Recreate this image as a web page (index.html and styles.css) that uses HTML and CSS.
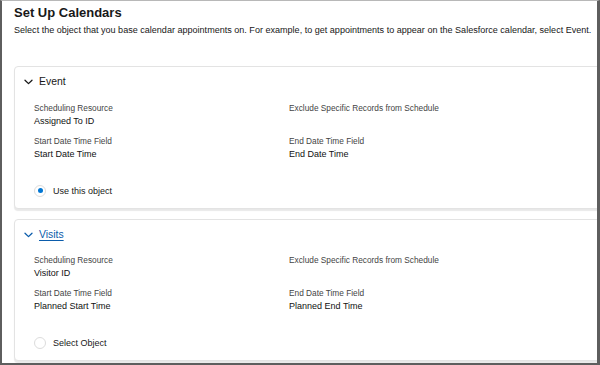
FILE: index.html
```html
<!DOCTYPE html>
<html>
<head>
<meta charset="utf-8">
<link rel="stylesheet" href="styles.css">
</head>
<body>
<div class="frame">
  <h1 class="title">Set Up Calendars</h1>
  <p class="subtitle">Select the object that you base calendar appointments on. For example, to get appointments to appear on the Salesforce calendar, select Event.</p>

  <section class="card">
    <div class="card-header">
      <svg class="chevron" width="9" height="6" viewBox="0 0 9 6"><path d="M1 1.2 L4.5 4.6 L8 1.2" fill="none" stroke="#181818" stroke-width="1.3" stroke-linecap="round" stroke-linejoin="round"/></svg>
      <span class="card-title">Event</span>
    </div>
    <div class="card-body">
      <div class="fields">
        <div class="field"><div class="label">Scheduling Resource</div><div class="value">Assigned To ID</div></div>
        <div class="field"><div class="label">Exclude Specific Records from Schedule</div><div class="value"></div></div>
        <div class="field"><div class="label">Start Date Time Field</div><div class="value">Start Date Time</div></div>
        <div class="field"><div class="label">End Date Time Field</div><div class="value">End Date Time</div></div>
      </div>
      <div class="radio-row">
        <span class="radio checked"></span>
        <span class="radio-label">Use this object</span>
      </div>
    </div>
  </section>

  <section class="card">
    <div class="card-header">
      <svg class="chevron" width="9" height="6" viewBox="0 0 9 6"><path d="M1 1.2 L4.5 4.6 L8 1.2" fill="none" stroke="#0b5cab" stroke-width="1.3" stroke-linecap="round" stroke-linejoin="round"/></svg>
      <a class="card-title link">Visits</a>
    </div>
    <div class="card-body">
      <div class="fields">
        <div class="field"><div class="label">Scheduling Resource</div><div class="value">Visitor ID</div></div>
        <div class="field"><div class="label">Exclude Specific Records from Schedule</div><div class="value"></div></div>
        <div class="field"><div class="label">Start Date Time Field</div><div class="value">Planned Start Time</div></div>
        <div class="field"><div class="label">End Date Time Field</div><div class="value">Planned End Time</div></div>
      </div>
      <div class="radio-row">
        <span class="radio"></span>
        <span class="radio-label">Select Object</span>
      </div>
    </div>
  </section>
</div>
</body>
</html>
```

FILE: styles.css
```css
html, body {
  margin: 0;
  padding: 0;
  background: #ffffff;
}
body {
  font-family: "Liberation Sans", Arial, sans-serif;
  color: #181818;
}
.frame {
  box-sizing: border-box;
  width: 600px;
  height: 365px;
  overflow: hidden;
  border-top: 1px solid #b8b8b8;
  border-left: 2px solid #5e5e5e;
  border-right: 3px solid #5e5e5e;
  border-bottom: 2px solid #5e5e5e;
  padding: 4px 0 0 12px;
}
.title {
  margin: 0;
  font-size: 13px;
  line-height: 16px;
  font-weight: bold;
  color: #181818;
}
.subtitle {
  margin: 3px 0 0 0;
  font-size: 9.05px;
  line-height: 12px;
  white-space: nowrap;
  color: #181818;
}
.card {
  margin: 30px -8px 0 0;
  border: 1px solid #e3e3e3;
  border-radius: 4px;
  box-shadow: 0 2px 1px rgba(0, 0, 0, 0.09);
  background: #fff;
}
.card + .card {
  margin-top: 10px;
}
.card-header {
  display: flex;
  align-items: center;
  padding: 8px 0 0 9px;
  height: 14px;
}
.chevron {
  display: block;
  margin-right: 6px;
}
.card-title {
  font-size: 10.4px;
  line-height: 14px;
  color: #181818;
}
.card-title.link {
  color: #0b5cab;
  text-decoration: underline;
  text-underline-offset: 2px;
}
.card-body {
  padding: 12.5px 0 10px 19px;
}
.fields {
  display: grid;
  grid-template-columns: 255px 1fr;
  row-gap: 6px;
}
.label {
  font-size: 8.3px;
  line-height: 12px;
  color: #444444;
}
.value {
  font-size: 9px;
  line-height: 15px;
  height: 15px;
  color: #111111;
}
.radio-row {
  display: flex;
  align-items: center;
  margin-top: 22px;
  height: 14px;
}
.radio {
  box-sizing: border-box;
  width: 12px;
  height: 12px;
  border: 1px solid #dcdcdc;
  border-radius: 50%;
  background: #fff;
  display: flex;
  align-items: center;
  justify-content: center;
  margin-right: 7px;
}
.radio.checked::after {
  content: "";
  width: 5px;
  height: 5px;
  border-radius: 50%;
  background: #0176d3;
}
.radio-label {
  font-size: 9px;
  line-height: 14px;
  color: #181818;
}
```
